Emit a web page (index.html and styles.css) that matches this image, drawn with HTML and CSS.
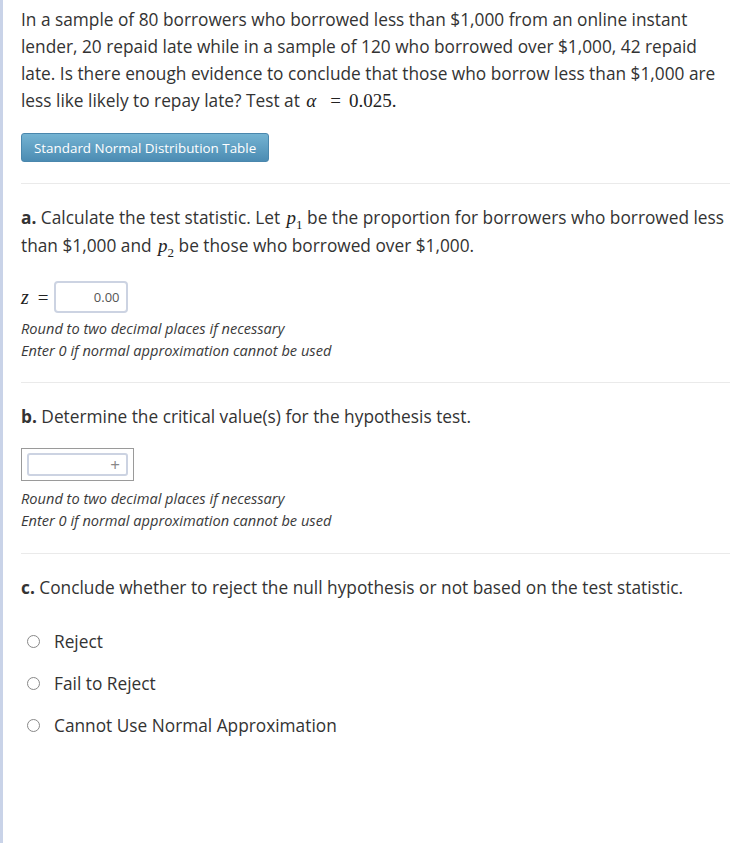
FILE: index.html
```html
<!DOCTYPE html>
<html lang="en">
<head>
    <meta charset="UTF-8">
    <title>Hypothesis Test - Two Proportions</title>
    <link rel="stylesheet" href="styles.css">
</head>
<body>

<div class="question">
    <p class="stem">
        In a sample of 80 borrowers who borrowed less than $1,000 from an online instant
        lender, 20 repaid late while in a sample of 120 who borrowed over $1,000, 42 repaid
        late. Is there enough evidence to conclude that those who borrow less than $1,000 are
        less like likely to repay late? Test at <span class="math"><i>α</i><span class="eq">=</span>0.025.</span>
    </p>

    <button type="button" class="table-btn">Standard Normal Distribution Table</button>

    <div class="part part-a">
        <p class="prompt">
            <b>a.</b> Calculate the test statistic. Let <span class="math"><i>p</i><sub>1</sub></span> be the proportion for borrowers who borrowed less
            than $1,000 and <span class="math"><i>p</i><sub>2</sub></span> be those who borrowed over $1,000.
        </p>
        <div class="answer-row">
            <span class="math"><i>z</i><span class="eq">=</span></span>
            <input type="text" class="num-input" value="0.00">
        </div>
        <div class="hint">
            Round to two decimal places if necessary<br>
            Enter 0 if normal approximation cannot be used
        </div>
    </div>

    <div class="part part-b">
        <p class="prompt"><b>b.</b> Determine the critical value(s) for the hypothesis test.</p>
        <div class="multi-box">
            <div class="multi-input"><span class="plus">+</span></div>
        </div>
        <div class="hint">
            Round to two decimal places if necessary<br>
            Enter 0 if normal approximation cannot be used
        </div>
    </div>

    <div class="part part-c">
        <p class="prompt"><b>c.</b> Conclude whether to reject the null hypothesis or not based on the test statistic.</p>
        <ul class="choices">
            <li><span class="radio"></span>Reject</li>
            <li><span class="radio"></span>Fail to Reject</li>
            <li><span class="radio"></span>Cannot Use Normal Approximation</li>
        </ul>
    </div>
</div>

</body>
</html>
```

FILE: styles.css
```css
body {
    margin: 0;
    padding: 0;
    background-color: #fff;
    font-family: "Open Sans", Arial, sans-serif;
    color: #333;
}
.question {
    min-height: 843px;
    box-sizing: border-box;
    border-left: 3px solid #c9d3e8;
    padding: 6px 17px 0 18px;
}
.stem {
    margin: 0;
    font-size: 17.3px;
    line-height: 27px;
}

/* inline math: serif letters, like the typeset formulas */
.math {
    font-family: "Liberation Serif", "DejaVu Serif", serif;
    font-size: 19px;
    line-height: 0;
    color: #222;
}
.math i {
    font-size: 19px;
    margin-left: 2px;
}
.math sub {
    font-style: normal;
    font-size: 13px;
    line-height: 0;
}
.eq {
    padding: 0 8px 0 14px;
}

.table-btn {
    margin-top: 19px;
    margin-bottom: 21px;
    height: 29px;
    padding: 0 12px;
    font-family: "Open Sans", Arial, sans-serif;
    font-size: 13.4px;
    color: #fff;
    background: linear-gradient(#74b3d2, #4c8cb3);
    border: 1px solid #4a87ad;
    border-radius: 3px;
}
.part {
    border-top: 1px solid #eaeaea;
    padding-top: 20px;
}
.prompt {
    margin: 0;
    font-size: 17.3px;
    line-height: 28px;
}
.part-a { padding-bottom: 21px; }
.part-b { padding-bottom: 22px; }
.part-c { padding-top: 20px; }
.part-a .prompt { margin-bottom: 21px; }
.part-b .prompt { margin-bottom: 17px; }

.answer-row {
    display: flex;
    align-items: center;
}
.answer-row .math i {
    margin-left: 0;
    font-size: 20px;
}
.answer-row .eq {
    padding: 0 5px 0 9px;
}
.num-input {
    width: 74px;
    height: 32px;
    box-sizing: border-box;
    border: 2px solid #ccd3e2;
    border-radius: 4px;
    text-align: right;
    padding: 0 6px;
    font-family: "Open Sans", Arial, sans-serif;
    font-size: 13px;
    color: #555;
}
.hint {
    margin-top: 4px;
    font-size: 14.6px;
    line-height: 22px;
    font-style: italic;
    color: #3a3a3a;
}
.part-b .hint {
    margin-top: 6px;
}
.multi-box {
    width: 113px;
    height: 33px;
    box-sizing: border-box;
    border: 1px solid #9a9a9a;
    padding: 4px 5px;
}
.multi-input {
    height: 100%;
    box-sizing: border-box;
    border: 2px solid #ccd3e2;
    border-radius: 3px;
    display: flex;
    justify-content: flex-end;
    align-items: center;
    padding-right: 6px;
}
.plus {
    font-size: 17px;
    color: #888;
}
.choices {
    list-style: none;
    margin: 0;
    padding: 18px 0 0 6px;
}
.choices li {
    display: flex;
    align-items: center;
    font-size: 17.3px;
    height: 42px;
}
.radio {
    width: 11px;
    height: 11px;
    border: 1px solid #888;
    border-radius: 50%;
    margin-right: 14px;
}
```
